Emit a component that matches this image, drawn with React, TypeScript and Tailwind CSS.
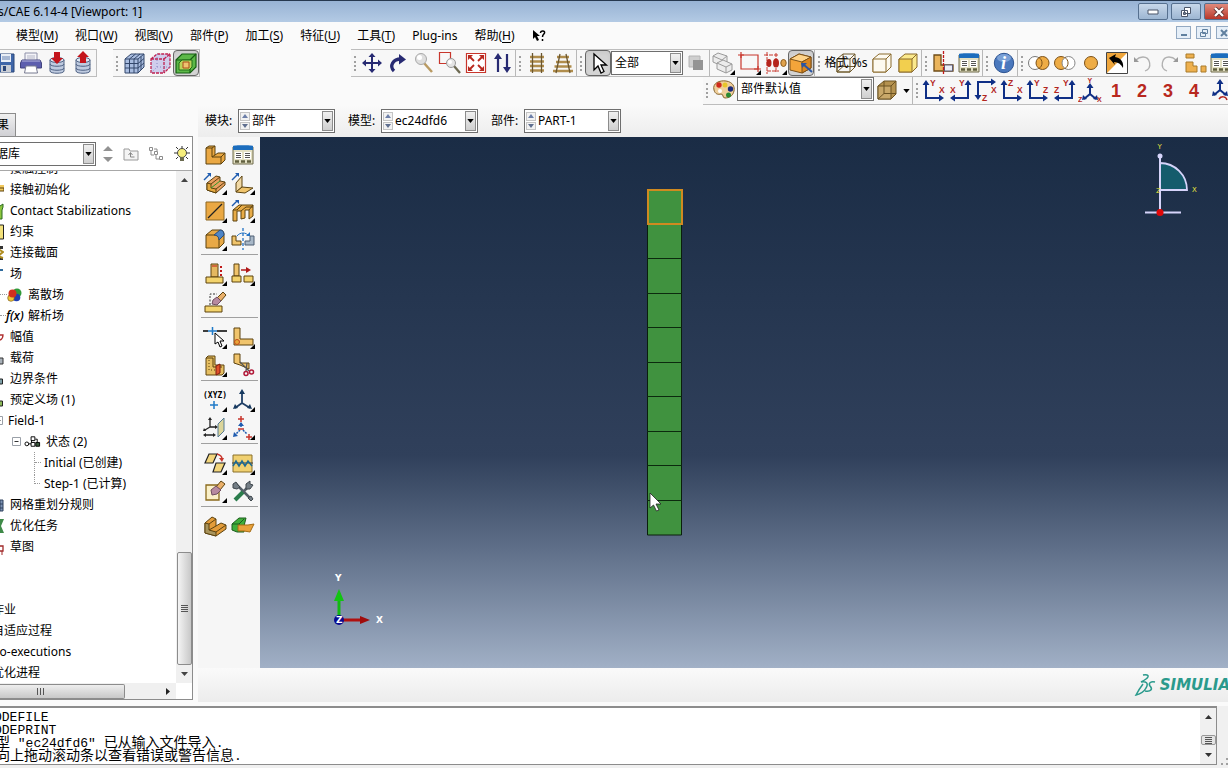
import React from "react";
import type { ReactNode } from "react";

/* ---------- small helpers ---------- */

const cx = (...c: (string | false | undefined)[]) => c.filter(Boolean).join(" ");

function Svg({ children, className = "size-6" }: { children: ReactNode; className?: string }) {
  return (
    <svg viewBox="0 0 24 24" className={cx("block shrink-0", className)} fill="none" aria-hidden="true">
      {children}
    </svg>
  );
}

const Corner = () => <path d="M24 19v5h-5z" fill="#000" />;

function ToolButton({ label, active, children }: { label: string; active?: boolean; children: ReactNode }) {
  return (
    <button
      type="button"
      aria-label={label}
      className={cx(
        "flex h-[26px] w-[26px] shrink-0 items-center justify-center",
        active && "rounded border border-[#666] bg-[#d4d4d4] shadow-inner",
      )}
    >
      {children}
    </button>
  );
}

const Grip = () => (
  <span className="flex w-2 shrink-0 items-center justify-center">
    <span className="h-[15px] border-l-2 border-dotted border-[#a0a0a0]" />
  </span>
);

const Sep = () => <span className="w-px shrink-0 bg-[#b8b8b8]" />;

const DownArrow = ({ className = "" }: { className?: string }) => (
  <svg viewBox="0 0 8 5" className={cx("h-1 w-[7px]", className)} aria-hidden="true">
    <path d="M0 0h8L4 5z" fill="#000" />
  </svg>
);

const UpDown = () => (
  <span className="flex h-full w-[10px] shrink-0 flex-col gap-px py-px">
    <span className="flex flex-1 items-center justify-center border border-[#c4c4c4] bg-[#f2f2f2]">
      <svg viewBox="0 0 6 4" className="h-1 w-1.5"><path d="M0 4h6L3 0z" fill="#6d7fa8" /></svg>
    </span>
    <span className="flex flex-1 items-center justify-center border border-[#c4c4c4] bg-[#f2f2f2]">
      <svg viewBox="0 0 6 4" className="h-1 w-1.5"><path d="M0 0h6L3 4z" fill="#5f6f8f" /></svg>
    </span>
  </span>
);

function Combo({ label, value, className, spin }: { label: string; value: string; className: string; spin?: boolean }) {
  return (
    <span className={cx("flex h-6 shrink-0 items-stretch overflow-hidden border border-[#6e6e6e] bg-white p-px", className)}>
      {spin && <UpDown />}
      <select
        aria-label={label}
        className="min-w-0 flex-1 appearance-none bg-transparent pl-0.5 text-xs text-black outline-none"
        defaultValue={value}
      >
        <option>{value}</option>
      </select>
      <span className="pointer-events-none flex w-[11px] shrink-0 items-center justify-center border border-[#8c8c8c] bg-linear-to-b from-[#f0f0f0] to-[#cfcfcf]">
        <DownArrow />
      </span>
    </span>
  );
}

/* ---------- toolbar icons ---------- */

const SaveIcon = () => (
  <Svg>
    <path d="M4 3h17v18H6l-2-2z" fill="#3f66a8" stroke="#2b4678" />
    <path d="M8 3h10v8H8z" fill="#e9eef6" />
    <path d="M9 6h8M9 8h8" stroke="#6580b0" />
    <path d="M8 14h10v7H8z" fill="#c9cdd4" />
    <path d="M10 15h3v5h-3z" fill="#2b4678" />
  </Svg>
);

const PrintIcon = () => (
  <Svg>
    <path d="M6 2h12v8H6z" fill="#f4f4f8" stroke="#8d90a8" />
    <path d="M8 5h8M8 7h8" stroke="#b3b5c6" />
    <path d="M3 9h18l1.500 3v5h-21v-5z" fill="#5d5fae" stroke="#43447f" />
    <path d="M3 10h18" stroke="#b9bae0" />
    <path d="M7 15h10l1.500 7h-13z" fill="#fff" stroke="#777a90" />
  </Svg>
);

const DbIcon = ({ up }: { up?: boolean }) => (
  <Svg>
    <path d="M5 9v11c0 3 14 3 14 0V9z" fill="#bfcbe0" stroke="#4f6284" />
    <ellipse cx="12" cy="9" rx="7" ry="2.500" fill="#dfe6f2" stroke="#4f6284" />
    <path d="M5 13c0 3 14 3 14 0M5 17c0 3 14 3 14 0" stroke="#4f6284" />
    {up ? <path d="M12 0l6 6h-3v6H9V6H6z" fill="#c4151c" /> : <path d="M9 1h6v6h3l-6 6-6-6h3z" fill="#c4151c" />}
  </Svg>
);

const WireCube = () => (
  <Svg>
    <path d="M3 8l6-5h13v13l-6 6H3z" fill="#a9bde0" stroke="#33476b" />
    <path d="M3 8h13v14M16 8l6-5M3 12.500h13l6-5M3 17h13l6-5M7.500 22V8l6-5M12 22V8l6-5M19 5.500V19" stroke="#33476b" />
  </Svg>
);

const HiddenCube = () => (
  <Svg>
    <path d="M3 8l6-5h13v13l-6 6H3z" fill="#cfcdec" />
    <path d="M3 8h13v14H3zM16 8l6-5v13l-6 6M3 8l6-5h13" stroke="#c02050" strokeWidth="1.300" strokeDasharray="3 1" />
    <path d="M9 3v13l-6 6M9 16h13" stroke="#8d8ac4" strokeDasharray="1 2" />
  </Svg>
);

const ShadedCube = () => (
  <Svg>
    <path d="M2 9l6-6h14v13l-6 6H2z" fill="#5cb848" stroke="#155d12" strokeWidth="1.200" />
    <path d="M2 9h14v13M16 9l6-6" stroke="#155d12" strokeWidth="1.200" />
    <path d="M5 12l3-3h10v7l-3 3H5z" fill="#bcd35a" stroke="#207018" />
    <path d="M9 11h6v6H9z" fill="#efc36f" stroke="#b04a1c" />
  </Svg>
);

const MoveIcon = () => (
  <Svg>
    <path d="M12 4v16M4 12h16" stroke="#272a72" strokeWidth="2" />
    <path d="M12 2l3.500 4h-7zM12 22l3.500-4h-7zM2 12l4-3.500v7zM22 12l-4-3.500v7z" fill="#272a72" />
  </Svg>
);

const RotateIcon = () => (
  <Svg>
    <path d="M8 20C3 15 7 8 15 8" stroke="#272a72" strokeWidth="3.300" />
    <path d="M13 3l7 5.500-7 5z" fill="#272a72" />
  </Svg>
);

const ZoomIcon = () => (
  <Svg>
    <path d="M12 12l8 9" stroke="#b99a62" strokeWidth="2.500" />
    <circle cx="9" cy="8" r="5.500" fill="#dedede" stroke="#a9a9a9" />
    <circle cx="7.500" cy="6.500" r="2.500" fill="#fff" />
  </Svg>
);

const ZoomBoxIcon = () => (
  <Svg>
    <path d="M1.500 1.500h11v11h-11z" stroke="#c8362c" strokeWidth="1.200" />
    <path d="M16 15l6 7" stroke="#6d6a52" strokeWidth="2.300" />
    <circle cx="13" cy="12" r="4.500" fill="#e4e4e4" stroke="#9a9a9a" />
    <circle cx="12" cy="11" r="2" fill="#fff" />
  </Svg>
);

const FitIcon = () => (
  <Svg>
    <path d="M2.500 2.500h19v19h-19z" fill="#fff" stroke="#c8362c" strokeWidth="1.200" />
    <path d="M5 5l5 5M19 5l-5 5M5 19l5-5M19 19l-5-5" stroke="#b8281e" strokeWidth="1.800" />
    <path d="M4 4h5l-5 5zM20 4h-5l5 5zM4 20h5l-5-5zM20 20h-5l5-5z" fill="#b8281e" />
  </Svg>
);

const CycleIcon = () => (
  <Svg>
    <path d="M8 5v16M17 3v16" stroke="#272a72" strokeWidth="2.200" />
    <path d="M8 2l4 6H4zM17 22l4-6h-8z" fill="#272a72" />
  </Svg>
);

const LadderIcon = ({ perspective }: { perspective?: boolean }) => (
  <Svg>
    {perspective ? (
      <>
        <path d="M6 6h12M5 11h14M3.500 15.500h17M2 20h20" stroke="#b08d4c" strokeWidth="2.300" />
        <path d="M9 3L5 22M15 3l4 19" stroke="#6a562f" strokeWidth="1.300" />
      </>
    ) : (
      <>
        <path d="M5 6h14M5 10.500h14M5 15h14M5 19.500h14" stroke="#b08d4c" strokeWidth="2.300" />
        <path d="M7.500 2v20M16.500 2v20" stroke="#6a562f" strokeWidth="1.300" />
      </>
    )}
  </Svg>
);

const CursorIcon = () => (
  <Svg>
    <path d="M8 3v16l4-4 3 7 3-1.500-3-6.500h5.500z" fill="#fff" stroke="#000" strokeWidth="1.300" />
  </Svg>
);

const GraySquares = () => (
  <Svg>
    <path d="M5 5h11v11H5z" fill="#cfcfcf" stroke="#b4b4b4" />
    <path d="M9 9h10v10H9z" fill="#949494" />
  </Svg>
);

const GrayCubes = () => (
  <Svg>
    <path d="M2 5l5-3 9 3v7l-5 3-9-4zM2 5l9 4v6M11 9l5-4" fill="#ececec" stroke="#9a9a9a" />
    <path d="M6 12l6-3 9 4v6l-6 3-9-4zM6 12l9 4v6M15 16l6-3" fill="#ececec" stroke="#9a9a9a" />
    <Corner />
  </Svg>
);

const DragRect = () => (
  <Svg>
    <path d="M4 4h17v14H4z" stroke="#c8362c" strokeWidth="1.200" />
    <path d="M1 4h6M4 1v6M17 18h7M21 15v6" stroke="#c8362c" strokeWidth="1.200" />
    <Corner />
  </Svg>
);

const DotsIcon = () => (
  <Svg>
    <path d="M1 4h14M4 1v22M4 20h12M13 2v20" stroke="#c8362c" strokeDasharray="4 1" />
    <ellipse cx="6" cy="12" rx="2.500" ry="4" fill="#b5241c" />
    <ellipse cx="13" cy="12" rx="3" ry="4.500" fill="#b5241c" />
    <ellipse cx="20.500" cy="12" rx="2.700" ry="3.500" fill="#e0a24c" stroke="#8a5a1c" />
    <Corner />
  </Svg>
);

const SelectBoxIcon = () => (
  <Svg>
    <path d="M1 8l9-5 12 3v11l-9 5-12-3z" fill="#f3a53a" stroke="#7c5118" />
    <path d="M1 8l9-5 12 3-9 5z" fill="#ffd489" stroke="#7c5118" />
    <path d="M13 11v11l9-5V6z" fill="#d98621" stroke="#7c5118" />
    <path d="M14 13l9 8" stroke="#2a55a4" strokeWidth="2" />
    <path d="M12 12h6l-5 5z" fill="#2a55a4" />
  </Svg>
);

const BoxIcon = ({ fill = "none", side = "none", stroke = "#8a6a2c", inner }: { fill?: string; side?: string; stroke?: string; inner?: boolean }) => (
  <Svg>
    <path d="M3 8l6-5h12v13l-5 5H3z" fill={side} stroke={stroke} />
    <path d="M3 8h13v13H3z" fill={fill} stroke={stroke} />
    <path d="M16 8l5-5" stroke={stroke} />
    {inner && <path d="M9 3v12.500L3 21M9 15.500h12" stroke={stroke} />}
  </Svg>
);

const SectionIcon = () => (
  <Svg>
    <path d="M3 4h7v10h12v6H3z" fill="#eab45c" stroke="#6f4c17" strokeWidth="1.300" />
    <path d="M13.500 14h8v6h-8z" fill="#eceef6" stroke="#5c5c78" />
    <path d="M12.500 0v24" stroke="#c01818" strokeWidth="1.300" strokeDasharray="3 1" />
  </Svg>
);

const ManagerIcon = () => (
  <Svg>
    <path d="M2 4h20v17H2z" fill="#e3e0c4" stroke="#6e6a4a" />
    <path d="M2 3c0-1 20-1 20 0v4H2z" fill="#1c6dbd" />
    <path d="M4 9h7v7H4zM13 9h7v7h-7z" fill="#fff" />
    <path d="M5 10.500h5M5 12.500h5M5 14.500h5M14 10.500h5M14 12.500h5M14 14.500h5" stroke="#555" />
    <path d="M4 18.500h4M10 18.500h4M16 18.500h4" stroke="#62603f" strokeWidth="2.500" />
  </Svg>
);

const InfoIcon = () => (
  <Svg>
    <circle cx="12" cy="12" r="9.700" fill="#4a78bd" stroke="#2d5391" />
    <ellipse cx="12" cy="7" rx="7" ry="4" fill="#7aa0d6" />
    <text x="9" y="18" fill="#fff" fontFamily="Liberation Serif, serif" fontSize="18" fontWeight="bold" fontStyle="italic">i</text>
  </Svg>
);

const Circles = ({ mode }: { mode: "right" | "left" | "one" }) => (
  <Svg>
    {mode === "right" && (
      <>
        <circle cx="8" cy="12" r="6.500" fill="#fff" stroke="#777" />
        <circle cx="15.500" cy="12" r="6.500" fill="#eeac45" stroke="#7c5118" />
        <path d="M12 6.500a6.500 6.500 0 0 1 0 11" stroke="#7c5118" />
      </>
    )}
    {mode === "left" && (
      <>
        <circle cx="8" cy="12" r="6.500" fill="#eeac45" stroke="#7c5118" />
        <circle cx="15.500" cy="12" r="6.500" fill="#fff" stroke="#888" />
        <path d="M12 6.500a6.500 6.500 0 0 1 0 11" stroke="#7c5118" />
      </>
    )}
    {mode === "one" && <circle cx="12" cy="12" r="6.500" fill="#eeac45" stroke="#7c5118" />}
  </Svg>
);

const SwapIcon = () => (
  <Svg>
    <path d="M1.500 1.500h21v21h-21z" fill="#fff" stroke="#444" />
    <path d="M2 2h20L2 22z" fill="#efa63c" />
    <path d="M4 7l7-4-1 3c6 1 9 5 8 11-2-4-5-6-9-6l1 3z" fill="#000" />
  </Svg>
);

const UndoIcon = ({ redo }: { redo?: boolean }) => (
  <Svg>
    {redo ? (
      <>
        <path d="M10 20C2 17 5 6 12 6c3 0 5 1 7 3" stroke="#b0b0b0" strokeWidth="1.300" />
        <path d="M21 6v5h-5z" fill="#999" />
      </>
    ) : (
      <>
        <path d="M14 20c8-3 5-14-2-14-3 0-5 1-7 3" stroke="#b0b0b0" strokeWidth="1.300" />
        <path d="M3 6v5h5z" fill="#999" />
      </>
    )}
  </Svg>
);

const BlocksIcon = () => (
  <Svg>
    <path d="M3 3h8v4H3zM3 11h7v4h4v6H3zM18 15h5v6h-5z" fill="#eeb04e" stroke="#a87a2a" />
  </Svg>
);

const PaletteIcon = () => (
  <Svg>
    <path d="M2 12C0 5 8 2 14 3c7 1 9 6 8 10-1 5-5 7-9 7-3 0-1-4-4-4-3 1-6 0-7-4z" fill="#efcf9b" stroke="#86642e" />
    <circle cx="7" cy="7" r="2.700" fill="#cf2a1c" />
    <circle cx="13" cy="7" r="2.500" fill="#e8c52a" />
    <circle cx="18.500" cy="11" r="2.700" fill="#1c2a7a" />
    <circle cx="16.500" cy="17" r="2.500" fill="#2a8a32" />
    <circle cx="8" cy="13" r="2" fill="#fff" />
  </Svg>
);

type AxisKind = "YXr" | "YXl" | "ZXd" | "ZXr" | "YZr" | "ZYl";

const AxisLetter = ({ x, y, c }: { x: number; y: number; c: string }) => (
  <text x={x} y={y} fill="#b3261e" fontFamily="Liberation Sans, sans-serif" fontSize="8.500" fontWeight="bold">{c}</text>
);

const AxisIcon = ({ kind }: { kind: AxisKind }) => {
  const left = kind === "YXl" || kind === "ZYl";
  const down = kind === "ZXd";
  return (
    <Svg>
      {down ? (
        <>
          <path d="M4 20V4h16" stroke="#0f2f86" strokeWidth="2" />
          <path d="M4 22l3.500-5h-7zM22 4l-5-3.500v7z" fill="#0f2f86" />
        </>
      ) : left ? (
        <>
          <path d="M20 4v16H4" stroke="#0f2f86" strokeWidth="2" />
          <path d="M20 2l3.500 5h-7zM2 20l5-3.500v7z" fill="#0f2f86" />
        </>
      ) : (
        <>
          <path d="M4 4v16h16" stroke="#0f2f86" strokeWidth="2" />
          <path d="M4 2l3.500 5h-7zM22 20l-5-3.500v7z" fill="#0f2f86" />
        </>
      )}
      {kind === "YXr" && <><AxisLetter x={8} y={8} c="Y" /><AxisLetter x={17} y={15} c="X" /></>}
      {kind === "YXl" && <><AxisLetter x={11} y={8} c="Y" /><AxisLetter x={2} y={15} c="X" /></>}
      {kind === "ZXd" && <><AxisLetter x={17} y={15} c="X" /><AxisLetter x={8} y={23} c="Z" /></>}
      {kind === "ZXr" && <><AxisLetter x={8} y={8} c="Z" /><AxisLetter x={17} y={15} c="X" /></>}
      {kind === "YZr" && <><AxisLetter x={8} y={8} c="Y" /><AxisLetter x={17} y={15} c="Z" /></>}
      {kind === "ZYl" && <><AxisLetter x={11} y={8} c="Y" /><AxisLetter x={2} y={15} c="Z" /></>}
    </Svg>
  );
};

const IsoIcon = ({ letters = true }: { letters?: boolean }) => (
  <Svg>
    <g transform={letters ? undefined : "translate(0 -4)"}>
      <path d="M12 9v7l-6 5M12 16l6 5" stroke="#0f2f86" strokeWidth="2" />
      <path d="M12 5l3.500 5h-7zM4 22l1-5 4 4zM20 22l-1-5-4 4z" fill="#0f2f86" />
    </g>
    {letters ? (
      <g fill="#b3261e" fontFamily="Liberation Sans, sans-serif" fontSize="7" fontWeight="bold">
        <text x="9.500" y="5">Y</text><text x="0" y="24">Z</text><text x="19" y="24">X</text>
      </g>
    ) : (
      <path d="M11 21c2-3 7-3 8 1" stroke="#b3261e" strokeWidth="1.500" />
    )}
  </Svg>
);

/* ---------- toolbox icons ---------- */

const Y = "#f0c46c";
const O = "#5c430f";

const PartIcon = () => (
  <Svg>
    <path d="M3 5l3-2h6v9l3-2h7v7l-4 4H3z" fill="#eaa843" stroke={O} />
    <path d="M3 5h6v9h9v7M9 5l3-2M9 14l3-2M18 14l4-4" stroke={O} />
  </Svg>
);
const ExtrudeIcon = () => (
  <Svg>
    <path d="M4 12l9-7 4 1v4l5 1v3l-9 8-9-3z" fill="#e8a060" stroke={O} />
    <path d="M4 12l4 1v4l5 1v4l-9-3z" fill="#e4a83f" stroke={O} />
    <path d="M8 13l9-7M13 18l9-7" stroke={O} />
    <path d="M8 17l9-7" stroke="#2f9a2a" />
    <path d="M1 9l6-6" stroke="#1f5cb0" strokeWidth="1.500" /><path d="M8 2v4L4 2z" fill="#1f5cb0" />
    <Corner />
  </Svg>
);
const ShellIcon = () => (
  <Svg>
    <path d="M5 12l6-7v11l-6 5z" fill="#f1d9a6" stroke={O} /><path d="M5 21l6-5 11 1-8 5z" fill={Y} stroke={O} />
    <path d="M1 9l6-6" stroke="#1f5cb0" strokeWidth="1.500" /><path d="M8 2v4L4 2z" fill="#1f5cb0" />
    <Corner />
  </Svg>
);
const WireIcon = () => (
  <Svg><path d="M3 3h18v18H3z" fill="#eaa843" stroke="#8b6622" /><path d="M5 19L19 5" stroke="#222" strokeWidth="1.300" /><Corner /></Svg>
);
const CutIcon = () => (
  <Svg>
    <path d="M2 11l6-5h14v11l-4 3v-9h-4v8l-4 1v-8H6v10H2z" fill="#e8ac48" stroke={O} />
    <path d="M2 11h4l5-5M10 12l5-4h7M18 11l4-5" stroke={O} />
    <path d="M1 7l5-5" stroke="#1f5cb0" strokeWidth="1.500" /><path d="M8 1v4L4 1z" fill="#1f5cb0" /><Corner />
  </Svg>
);
const RoundIcon = () => (
  <Svg>
    <path d="M3 8l6-5h8c3 0 4 2 4 5v8l-5 5H3z" fill="#e8a946" stroke={O} />
    <path d="M3 8h8c4 0 5 2 5 5v8" stroke={O} /><path d="M11 8l6-5c3 0 4 2 4 5l-5 5c0-3-2-5-5-5z" fill="#4f86c6" stroke="#2a4d7c" /><Corner />
  </Svg>
);
const MirrorIcon = () => (
  <Svg>
    <path d="M1 9h4v5h5v4H1z" fill={Y} stroke={O} /><path d="M23 9h-4v5h-5v4h9z" fill="#a8b8c8" stroke="#4f5f73" />
    <path d="M12 1v22" stroke="#2272c4" strokeWidth="1.300" strokeDasharray="3 2" /><path d="M6 9c3-4 9-4 12 0" stroke="#2272c4" /><path d="M15 9h4V5z" fill="#2272c4" />
  </Svg>
);
const EditFeature = () => (
  <Svg><path d="M8 2h7v13H8z" fill="#e4b860" stroke={O} /><path d="M3 15h17v6H3z" fill="#f3d36c" stroke={O} /><path d="M18 4v10" stroke="#c01818" strokeWidth="2" strokeDasharray="2 2" /><path d="M9 4h5" stroke="#c01818" /><Corner /></Svg>
);
const MoveFeature = () => (
  <Svg><path d="M3 2h5v12H3z" fill={Y} stroke={O} /><path d="M1 14h9v6H1zM13 14h9v6h-9z" fill="#f3d36c" stroke={O} /><path d="M10 8h6" stroke="#b01818" strokeWidth="1.500" /><path d="M20 8l-5-3v6z" fill="#b01818" /><Corner /></Svg>
);
const DeleteFeature = () => (
  <Svg><path d="M2 16h17v6H2z" fill="#f3d36c" stroke={O} /><path d="M7 15V4h7" stroke="#333" strokeDasharray="2 1.500" /><path d="M14 8l6-6 3 3-6 7z" fill="#eab06a" stroke={O} /><path d="M10 10l4-3 4 4-4 4-5-1z" fill="#b78aa0" stroke="#704f60" /></Svg>
);
const DatumCursor = () => (
  <Svg><path d="M0 6h5M14 6h10" stroke="#000" strokeWidth="1.300" /><path d="M5 6h9M9.500 2v8" stroke="#1f7ac8" strokeWidth="1.500" /><path d="M12 8v11l3-2 2 5 2-1-2-5h4z" fill="#fff" stroke="#000" /><Corner /></Svg>
);
const LPoint = () => (
  <Svg><path d="M3 3h6v11h13v6H3z" fill={Y} stroke={O} /><circle cx="6" cy="17" r="2.500" fill="#e8a63a" stroke="#c04818" /><Corner /></Svg>
);
const RegionIcon = () => (
  <Svg><path d="M3 5l2-2h7v9h9v8l-2 2H3z" fill="#e6bf62" stroke={O} /><path d="M3 5h7v9h9" stroke={O} /><path d="M6 7v12M8 17h9" stroke={O} strokeDasharray="1 2" /><path d="M13 13l4-2v9l-4 2z" fill="#e0512a" stroke="#7c1c10" /><Corner /></Svg>
);
const ScissorIcon = () => (
  <Svg><path d="M3 1h6v9h9v6L9 12l-6-2z" fill={Y} stroke={O} /><path d="M9 9l9 9M16 10l-1 8" stroke="#555" strokeWidth="1.300" /><circle cx="15" cy="20.500" r="2" stroke="#b01838" strokeWidth="1.500" /><circle cx="20.500" cy="19" r="2" stroke="#b01838" strokeWidth="1.500" /></Svg>
);
const XyzIcon = () => (
  <Svg><text x="0" y="10" fontFamily="DejaVu Sans Mono, monospace" fontWeight="bold" fontSize="8" fill="#000">(XYZ)</text><path d="M7 17h8M11 13v8" stroke="#1f7ac8" strokeWidth="1.500" /><Corner /></Svg>
);
const TriAxis = () => (
  <Svg><path d="M11 4v12M11 15l-7 5M11 15l8 5" stroke="#1f3f66" strokeWidth="1.800" /><path d="M11 1l3 5H8zM2 21l2-5 3 4zM21 21l-5-1 3-4z" fill="#173a60" /><Corner /></Svg>
);
const PlaneIcon = () => (
  <Svg><path d="M7 3v8l-5 3M7 11h6M2 19h9" stroke="#222" strokeWidth="1.300" /><path d="M7 1l2 3H5zM15 11l-3 2V9zM0 15l1-3 2 3zM0 19l3-2v4zM13 19l-3-2v4z" fill="#222" /><path d="M15 8l6-6v13l-6 6z" fill="#dcd59a" stroke="#557a94" /><Corner /></Svg>
);
const DatumPoints = () => (
  <Svg><path d="M7 3h6M10 0v6M7 13h6M15 21h6M18 18v6" stroke="#c8362c" strokeWidth="1.500" /><path d="M10 7v4M9 14l-5 5M12 14l4 4" stroke="#1f5cb0" strokeWidth="1.500" strokeDasharray="2 1" /><path d="M10 6l3 4H7zM2 21l1-5 4 4z" fill="#1f5cb0" /><Corner /></Svg>
);
const PlaneMove = () => (
  <Svg><path d="M2 12l4-9h8l-4 9zM10 21l3-9h9l-4 9z" fill="#f3d67c" stroke="#222" strokeWidth="1.200" /><path d="M14 3c4 1 5 3 5 5" stroke="#c8362c" strokeWidth="1.500" /><path d="M19 11l-3-4h5z" fill="#c8362c" /><Corner /></Svg>
);
const WaveIcon = () => (
  <Svg><path d="M2 4h19v17H2z" fill="#f0d070" stroke="#8a702a" /><path d="M1 12h21" stroke="#3a3a3a" /><path d="M2 15l3-5 3 5 3-5 3 5 3-5 4 5" stroke="#1e6a92" strokeWidth="1.500" /><Corner /></Svg>
);
const ErasePage = () => (
  <Svg><path d="M3 6h13v15H3z" fill="#faf0c8" stroke="#8a6a1c" strokeWidth="1.300" /><path d="M13 8l5-6 4 3-5 6z" fill="#eab06a" stroke={O} /><path d="M8 11l5-4 5 4-4 4-5 1z" fill="#b78aa0" stroke="#704f60" /><Corner /></Svg>
);
const ToolsIcon = () => (
  <Svg><path d="M5 5l15 15" stroke="#566069" strokeWidth="2.500" /><path d="M4 21l8-8" stroke="#2b7d4c" strokeWidth="4" /><path d="M12 13l7-7" stroke="#566069" strokeWidth="2.500" /><path d="M2 5l3-2 2 3 2 2-3 2-4-1zM15 5l4-3v3l3 1-3 4h-4zM17 19l3-2 2 3-2 2z" fill="#747e86" stroke="#3e464c" /></Svg>
);
const CombineIcon = () => (
  <Svg><path d="M2 9l7-6 4 2v7l5-3 5 2v4l-10 7-11-3z" fill="#e39c3a" stroke={O} /><path d="M6 10l7-5M6 16l7-4M13 18l10-7" stroke={O} /><path d="M2 9l4 1v6l7 2v4l-11-3z" fill="#a8945c" stroke={O} /></Svg>
);
const RepairIcon = () => (
  <Svg><path d="M1 10l7-6h7l-2 8v6H6l-5-2z" fill="#3fae3b" stroke="#1c5c1c" /><path d="M1 10h7l5-5M8 10v7" stroke="#1c5c1c" /><path d="M7 11h10l6-1-4 8-6-1H7z" fill="#e9a13a" stroke="#a56c14" /></Svg>
);

/* ---------- chrome ---------- */

const WindowButton = ({ label, close, children }: { label: string; close?: boolean; children: ReactNode }) => (
  <button
    type="button"
    aria-label={label}
    className={cx(
      "flex h-[17px] w-[30px] items-center justify-center rounded-xs border border-[#56708f]",
      close ? "bg-linear-to-b from-[#e0897c] to-[#b8362a]" : "bg-linear-to-b from-[#c8d8ea] to-[#9db6d2]",
    )}
  >
    {children}
  </button>
);

const SmallButton = ({ label, children }: { label: string; children: ReactNode }) => (
  <button type="button" aria-label={label} className="flex h-[13px] w-[15px] items-center justify-center border border-[#93a9c2] bg-[#e6eff8]">
    {children}
  </button>
);

function TitleBar() {
  return (
    <header className="flex h-[22px] shrink-0 items-center border-t border-[#26384f] bg-linear-to-b from-[#98b3d4] to-[#b3cae4]">
      <h1 className="-ml-0.5 flex-1 text-xs text-black">s/CAE 6.14-4 [Viewport: 1]</h1>
      <div className="-mr-1.5 flex shrink-0 gap-[3px]">
        <WindowButton label="最小化">
          <svg viewBox="0 0 12 6" className="h-1.5 w-3"><path d="M1 1h10v4H1z" fill="#fff" stroke="#4a5568" /></svg>
        </WindowButton>
        <WindowButton label="还原">
          <svg viewBox="0 0 12 12" className="size-3"><path d="M4.500 1.500h6v6h-6z M1.500 4.500h6v6h-6z M3.500 6.500h2v2h-2z" fill="#fff" stroke="#4a5568" /></svg>
        </WindowButton>
        <WindowButton label="关闭" close>
          <svg viewBox="0 0 12 10" className="h-2.5 w-3"><path d="M2 1l8 8M10 1L2 9" stroke="#5b3030" strokeWidth="4" /><path d="M2 1l8 8M10 1L2 9" stroke="#fff" strokeWidth="2.400" /></svg>
        </WindowButton>
      </div>
    </header>
  );
}

const MENUS: [string, string, string][] = [
  ["模型(", "M", ")"], ["视口(", "W", ")"], ["视图(", "V", ")"], ["部件(", "P", ")"], ["加工(", "S", ")"],
  ["特征(", "U", ")"], ["工具(", "T", ")"], ["Plug-ins", "", ""], ["帮助(", "H", ")"],
];

function MenuBar() {
  return (
    <nav className="flex h-[27px] shrink-0 items-center justify-between bg-[#fafafa]">
      <div className="flex shrink-0 items-center gap-[17px] pl-4 text-xs text-black">
        {MENUS.map(([a, k, b]) => (
          <button key={a} type="button" className="whitespace-nowrap">
            {a}<u className="underline-offset-2">{k}</u>{b}
          </button>
        ))}
        <button type="button" aria-label="上下文帮助">
          <svg viewBox="0 0 14 12" className="h-3 w-3.5">
            <path d="M1 0v9l2-2 2 4 2-1-2-4h3z" fill="#000" />
            <path d="M8.500 3c0-3 5-2.500 4 0-.5 1.500-2 1.500-2 4M10.500 9v2" stroke="#000" strokeWidth="1.500" fill="none" />
          </svg>
        </button>
      </div>
      <div className="-mr-[3px] flex shrink-0 gap-[5px] pb-1.5">
        <SmallButton label="最小化视口"><span className="mt-1 h-0.5 w-1.5 bg-[#60809f]" /></SmallButton>
        <SmallButton label="还原视口">
          <svg viewBox="0 0 10 10" className="size-2.5"><path d="M3.500 1.500h5v4h-5zM1.500 4.500h5v4h-5z" fill="#e6eff8" stroke="#60809f" /></svg>
        </SmallButton>
        <SmallButton label="关闭视口">
          <svg viewBox="0 0 10 10" className="size-2.5"><path d="M2 2l6 6M8 2L2 8" stroke="#60809f" strokeWidth="2" /></svg>
        </SmallButton>
      </div>
    </nav>
  );
}

const AXES: AxisKind[] = ["YXr", "YXl", "ZXd", "ZXr", "YZr", "ZYl"];
const BAR = "flex shrink-0 items-stretch border-y border-r border-[#bdbdbd] bg-[#f7f7f7]";

function Toolbars() {
  return (
    <div className="flex shrink-0 flex-col overflow-hidden bg-[#fafafa]">
      <div className="flex h-7 shrink-0">
        <div className={cx(BAR, "-ml-2 w-[105px]")}>
          <ToolButton label="保存"><SaveIcon /></ToolButton>
          <ToolButton label="打印"><PrintIcon /></ToolButton>
          <ToolButton label="导入数据库"><DbIcon /></ToolButton>
          <ToolButton label="导出数据库"><DbIcon up /></ToolButton>
        </div>
        <div className={cx(BAR, "ml-4")}>
          <Grip />
          <ToolButton label="线框显示"><WireCube /></ToolButton>
          <ToolButton label="隐藏线显示"><HiddenCube /></ToolButton>
          <ToolButton label="着色显示" active><ShadedCube /></ToolButton>
        </div>
        <div className={cx(BAR, "ml-[151px]")}>
          <Grip />
          <ToolButton label="平移"><MoveIcon /></ToolButton>
          <ToolButton label="旋转"><RotateIcon /></ToolButton>
          <ToolButton label="缩放"><ZoomIcon /></ToolButton>
          <ToolButton label="框选缩放"><ZoomBoxIcon /></ToolButton>
          <ToolButton label="适应窗口"><FitIcon /></ToolButton>
          <ToolButton label="切换视图"><CycleIcon /></ToolButton>
          <Sep />
          <Grip />
          <ToolButton label="关闭透视"><LadderIcon /></ToolButton>
          <ToolButton label="打开透视"><LadderIcon perspective /></ToolButton>
          <Sep />
          <Grip />
          <ToolButton label="选择" active><CursorIcon /></ToolButton>
          <Combo label="选择过滤" value="全部" className="w-[72px] self-center" />
          <ToolButton label="叠加"><GraySquares /></ToolButton>
          <Sep />
          <ToolButton label="实体选择"><GrayCubes /></ToolButton>
          <ToolButton label="拖动形状"><DragRect /></ToolButton>
          <ToolButton label="选择范围"><DotsIcon /></ToolButton>
          <ToolButton label="选择最近" active><SelectBoxIcon /></ToolButton>
          <Sep />
          <Grip />
          <div className="grid w-[46px] shrink-0 items-center justify-items-center">
            <span className="col-start-1 row-start-1"><BoxIcon inner stroke="#6f5a2c" /></span>
            <span className="col-start-1 row-start-1 text-xs whitespace-nowrap text-black">格式 %s</span>
          </div>
          <ToolButton label="消隐盒"><BoxIcon fill="#fdfaf0" side="#fdfaf0" /></ToolButton>
          <ToolButton label="着色盒"><BoxIcon fill="#f2cf4e" side="#fbe98c" /></ToolButton>
          <Sep />
          <Grip />
          <ToolButton label="截面"><SectionIcon /></ToolButton>
          <ToolButton label="截面管理器"><ManagerIcon /></ToolButton>
          <Sep />
          <Grip />
          <ToolButton label="查询信息"><InfoIcon /></ToolButton>
          <Sep />
          <Grip />
          <ToolButton label="替换所选"><Circles mode="right" /></ToolButton>
          <ToolButton label="删除所选"><Circles mode="left" /></ToolButton>
          <ToolButton label="全部替换"><Circles mode="one" /></ToolButton>
          <ToolButton label="反转"><SwapIcon /></ToolButton>
          <ToolButton label="撤销"><UndoIcon /></ToolButton>
          <ToolButton label="重做"><UndoIcon redo /></ToolButton>
          <ToolButton label="显示组"><BlocksIcon /></ToolButton>
          <ToolButton label="显示组管理器"><ManagerIcon /></ToolButton>
        </div>
      </div>
      <div className="flex h-7 shrink-0 justify-start">
        <div className={cx(BAR, "ml-[703px] items-center border-t-0")}>
          <Grip />
          <ToolButton label="颜色"><PaletteIcon /></ToolButton>
          <Combo label="颜色映射" value="部件默认值" className="w-[137px]" />
          <ToolButton label="半透明"><BoxIcon inner fill="#c9a869" side="#b5924f" stroke="#6b5222" /></ToolButton>
          <button type="button" aria-label="半透明选项" className="flex w-3 shrink-0 items-center justify-center"><DownArrow /></button>
          <span className="w-px shrink-0 self-stretch bg-[#b8b8b8]" />
          <Grip />
          {AXES.map((k) => (
            <ToolButton key={k} label={"视图 " + k}><AxisIcon kind={k} /></ToolButton>
          ))}
          <ToolButton label="等轴测"><IsoIcon /></ToolButton>
          {["1", "2", "3", "4"].map((n) => (
            <button key={n} type="button" className="flex w-[26px] shrink-0 items-center justify-center font-['Liberation_Sans',sans-serif] text-lg font-bold text-[#b8281e]">{n}</button>
          ))}
          <ToolButton label="自定义视图"><IsoIcon letters={false} /></ToolButton>
        </div>
      </div>
    </div>
  );
}

/* ---------- model tree ---------- */

const TI = "block h-[18px] w-[14px] shrink-0";
const treeIcon: Record<string, ReactNode> = {
  yellow: <svg className={TI} viewBox="0 0 14 18"><path d="M0 4h14v3H7v9H0z" fill="#f0c75c" /><path d="M0 7h14v3H7" stroke="#5c430f" fill="#f0c75c" /></svg>,
  green: <svg className={TI} viewBox="0 0 14 18"><path d="M2 4h8l3-2v3l-1 3v9H7V8H2z" fill="#8cc63e" stroke="#2a6a20" /></svg>,
  page: <svg className={TI} viewBox="0 0 14 18"><path d="M2 2h11.500v14H2z" fill="#f3e17a" stroke="#222" /></svg>,
  conn: <svg className={TI} viewBox="0 0 14 18"><path d="M4 2h9v3H4zM4 13h9v3H4z" fill="#333" /><path d="M8 5l5 3-5 4 5 2" stroke="#b08d20" strokeWidth="2" fill="none" /></svg>,
  field: <svg className={TI} viewBox="0 0 14 18"><path d="M6 14V5h7" stroke="#2f6a9c" strokeWidth="2" fill="none" /></svg>,
  amp: <svg className={TI} viewBox="0 0 14 18"><path d="M2 7h11c0 4-2 6-8 6" stroke="#b03030" strokeWidth="1.300" fill="none" /></svg>,
  load: <svg className={TI} viewBox="0 0 14 18"><path d="M3 6h6v3h4v6H3z" fill="#a8b0b8" stroke="#333" /></svg>,
  bc: <svg className={TI} viewBox="0 0 14 18"><path d="M3 9h9.500v5H3z" fill="#7ea0a8" stroke="#222" /></svg>,
  pre: <svg className={TI} viewBox="0 0 14 18"><path d="M3 10h9.500v5H3z" fill="#8cba5a" stroke="#222" /></svg>,
  mesh: <svg className={TI} viewBox="0 0 14 18"><path d="M2 4h11v11H2z" fill="#7c92b4" stroke="#2f405c" /><path d="M2 8h11M2 12h11M6 4v11M10 4v11" stroke="#2f405c" /></svg>,
  opt: <svg className={TI} viewBox="0 0 14 18"><path d="M2 2h12l-3 7 3 7H2z" fill="#3f8a48" /></svg>,
  sketch: <svg className={TI} viewBox="0 0 14 18"><path d="M4 8h9v5H4z" fill="#fff" stroke="#a02828" strokeWidth="1.300" /><path d="M12 13v4" stroke="#a02828" /></svg>,
};

const MinusBox = ({ className = "" }: { className?: string }) => (
  <svg viewBox="0 0 9 9" className={cx("size-[9px] shrink-0", className)}><path d="M.5.5h8v8h-8z" fill="#fff" stroke="#9aa0a8" /><path d="M2.500 4.500h4" stroke="#333" /></svg>
);

const Row = ({ children, className = "" }: { children?: ReactNode; className?: string }) => (
  <li className={cx("flex h-[21px] shrink-0 items-center whitespace-nowrap", className)}>{children}</li>
);

const IconRow = ({ icon, children }: { icon: string; children: ReactNode }) => (
  <Row className="-ml-[10px] gap-1.5">{treeIcon[icon]}<span>{children}</span></Row>
);

const VThumbLines = () => (
  <span className="flex h-[7px] w-[7px] flex-col justify-between">
    <i className="h-px bg-[#555]" /><i className="h-px bg-[#555]" /><i className="h-px bg-[#555]" /><i className="h-px bg-[#555]" />
  </span>
);

function ModelTree() {
  return (
    <aside className="flex w-[193px] shrink-0 flex-col overflow-hidden pt-2">
      <div className="flex h-[23px] shrink-0">
        <button type="button" className="-ml-5 w-9 border border-b-0 border-[#8c8c8c] bg-linear-to-b from-[#f0f0f0] to-[#d0d0d4] text-right text-xs">
          <span className="mr-1.5">结果</span>
        </button>
      </div>
      <div className="flex min-h-0 flex-1 flex-col border-t border-r border-b border-[#8c8c8c] bg-white">
        <div className="flex h-[34px] shrink-0 items-center justify-between border-b border-[#a8a8a8]">
          <Combo label="模型数据库" value="模型数据库" className="-ml-11 w-[140px]" />
          <div className="flex flex-1 items-center justify-between pr-0.5 pl-[7px]">
            <svg viewBox="0 0 10 18" className="h-[18px] w-2.5"><path d="M0 6h10L5 1zM0 12h10l-5 5z" fill="#929292" /></svg>
            <button type="button" aria-label="上一级">
              <svg viewBox="0 0 16 14" className="h-3.5 w-4"><path d="M1 2h5l1 2h8v9H1z" fill="#f4f4f4" stroke="#9a9a9a" /><path d="M7.500 6v4h4M5.500 8l2-2.500 2 2.500" stroke="#888" fill="none" /></svg>
            </button>
            <button type="button" aria-label="展开树">
              <svg viewBox="0 0 16 16" className="size-4"><path d="M1.500 1.500h3v3h-3zM6.500 5.500h3v3h-3zM11.500 10.500h3v3h-3zM3 5v4h3M8 9v4h3M6 3h3v2" fill="none" stroke="#8c8c8c" /></svg>
            </button>
            <button type="button" aria-label="提示">
              <svg viewBox="0 0 16 16" className="size-4"><circle cx="8" cy="7" r="4.500" fill="#f6ee7c" stroke="#444" /><path d="M6 11h4v4H6z" fill="#6b6b50" /><path d="M8 0v2M0 7h3M13 7h3M2 1l2 2M14 1l-2 2M2 13l2-2M14 13l-2-2" stroke="#333" /></svg>
            </button>
          </div>
        </div>
        <div className="flex min-h-0 flex-1">
          <div className="flex min-w-0 flex-1 flex-col">
            <div className="min-h-0 flex-1 overflow-hidden">
              <ul className="-mt-[13px] flex flex-col text-xs text-black">
                <IconRow icon="yellow">接触控制</IconRow>
                <IconRow icon="yellow">接触初始化</IconRow>
                <IconRow icon="green">Contact Stabilizations</IconRow>
                <IconRow icon="page">约束</IconRow>
                <IconRow icon="conn">连接截面</IconRow>
                <IconRow icon="field">场</IconRow>
                <Row>
                  <span className="w-[7px] border-t border-dotted border-[#999]" />
                  <svg viewBox="0 0 15 14" className="h-3.5 w-[15px]">
                    <circle cx="10" cy="5" r="4.500" fill="#2f9a3a" /><circle cx="9.500" cy="9.500" r="3.800" fill="#1f3fb0" /><circle cx="4" cy="10" r="3.300" fill="#f0c83a" stroke="#6b4a10" strokeWidth=".6" /><circle cx="5.500" cy="5.500" r="4" fill="#d0301e" />
                  </svg>
                  <span className="pl-1.5">离散场</span>
                </Row>
                <Row>
                  <span className="w-1.5 border-t border-dotted border-[#999]" />
                  <i className="w-[22px] font-['Open_Sans'] font-semibold">f(x)</i>
                  <span>解析场</span>
                </Row>
                <IconRow icon="amp">幅值</IconRow>
                <IconRow icon="load">载荷</IconRow>
                <IconRow icon="bc">边界条件</IconRow>
                <IconRow icon="pre">预定义场 (1)</IconRow>
                <Row><MinusBox className="-ml-[6px]" /><span className="pl-[5px]">Field-1</span></Row>
                <Row className="pl-3">
                  <MinusBox />
                  <svg viewBox="0 0 18 14" className="ml-[3px] h-3.5 w-[17px]"><circle cx="3" cy="9" r="2" fill="#fff" stroke="#000" /><path d="M7.500 1.500h4v4h-4zM5 9h3M8 9V5M12 4h2v4" fill="none" stroke="#000" /><path d="M7.500 7.500h4v4h-4z" fill="#fff" stroke="#000" /><path d="M12.500 7.500h4v4h-4z" fill="#38583c" stroke="#000" /></svg>
                  <span className="pl-[5px]">状态 (2)</span>
                </Row>
                <Row className="pl-[34px]"><span className="flex h-full w-2.5 items-center border-l border-dotted border-[#999]"><i className="w-1.5 border-t border-dotted border-[#999]" /></span>Initial (已创建)</Row>
                <Row className="pl-[34px]"><span className="mb-2.5 h-2.5 w-1.5 border-b border-l border-dotted border-[#999]" /><span className="pl-1">Step-1 (已计算)</span></Row>
                <IconRow icon="mesh">网格重划分规则</IconRow>
                <IconRow icon="opt">优化任务</IconRow>
                <IconRow icon="sketch">草图</IconRow>
                <Row />
                <Row />
                <Row className="-ml-2">作业</Row>
                <Row className="-ml-2">自适应过程</Row>
                <Row className="-ml-2">Co-executions</Row>
                <Row className="-ml-2">优化进程</Row>
              </ul>
            </div>
            <div className="flex h-4 shrink-0 items-center bg-[#f0f0f0]">
              <div className="flex h-[15px] w-[125px] items-center justify-center rounded-r-xs border border-l-0 border-[#8c8c8c] bg-linear-to-b from-[#eee] to-[#c8c8c8] pr-11">
                <span className="flex h-[7px] w-[7px] justify-between"><i className="w-px bg-[#555]" /><i className="w-px bg-[#555]" /><i className="w-px bg-[#555]" /></span>
              </div>
              <span className="flex flex-1 justify-end pr-1.5"><svg viewBox="0 0 4 7" className="h-[7px] w-1"><path d="M0 0v7l4-3.500z" fill="#222" /></svg></span>
            </div>
          </div>
          <div className="mb-4 flex w-4 shrink-0 flex-col items-center bg-[#f0f0f0]">
            <span className="flex h-[17px] items-center"><svg viewBox="0 0 7 4" className="h-1 w-[7px]"><path d="M0 4h7L3.500 0z" fill="#444" /></svg></span>
            <span className="flex-1" />
            <div className="flex h-[113px] w-[15px] items-center justify-center rounded-xs border border-[#8c8c8c] bg-linear-to-r from-[#f4f4f4] to-[#c8c8c8]"><VThumbLines /></div>
            <span className="flex h-[18px] items-center"><svg viewBox="0 0 7 4" className="h-1 w-[7px]"><path d="M0 0h7L3.500 4z" fill="#444" /></svg></span>
          </div>
        </div>
      </div>
    </aside>
  );
}

/* ---------- module area ---------- */

function ContextBar() {
  const items = [["模块:", "部件"], ["模型:", "ec24dfd6"], ["部件:", "PART-1"]];
  return (
    <div className="flex h-8 shrink-0 items-center gap-[13px] bg-linear-to-b from-[#fafafa] to-[#ededed] pl-[7px] text-xs text-black">
      {items.map(([label, value]) => (
        <label key={label} className="flex shrink-0 items-center">
          <span className="w-[33px] whitespace-nowrap">{label}</span>
          <Combo label={label} value={value} spin className="w-[97px]" />
        </label>
      ))}
    </div>
  );
}

const TOOLBOX: [string, ReactNode][][] = [
  [["创建部件", <PartIcon />], ["部件管理器", <ManagerIcon />], ["拉伸实体", <ExtrudeIcon />], ["拉伸壳", <ShellIcon />], ["创建线", <WireIcon />], ["拉伸切削", <CutIcon />], ["倒圆角", <RoundIcon />], ["镜像", <MirrorIcon />]],
  [["编辑特征", <EditFeature />], ["重新生成", <MoveFeature />], ["删除特征", <DeleteFeature />]],
  [["分割边", <DatumCursor />], ["分割面", <LPoint />], ["分割几何体", <RegionIcon />], ["裁剪", <ScissorIcon />]],
  [["基准点", <XyzIcon />], ["基准轴", <TriAxis />], ["基准面", <PlaneIcon />], ["基准坐标系", <DatumPoints />]],
  [["移动面", <PlaneMove />], ["修复边", <WaveIcon />], ["删除面", <ErasePage />], ["几何编辑", <ToolsIcon />]],
  [["创建中面", <CombineIcon />], ["指派中面", <RepairIcon />]],
];

function Toolbox() {
  return (
    <div className="flex w-[62px] shrink-0 flex-col bg-[#f6f6f6] pt-1 pr-0.5 pl-[3px]">
      {TOOLBOX.map((group, i) => (
        <div key={i} className={cx("grid grid-cols-[28px_28px]", i > 0 && "mt-px border-t border-[#a0a0a0] pt-[5px]")}>
          {group.map(([label, icon]) => (
            <button key={label} type="button" aria-label={label} className="flex size-7 items-center justify-center">{icon}</button>
          ))}
        </div>
      ))}
    </div>
  );
}

function Viewport() {
  return (
    <div className="relative min-w-0 flex-1 overflow-hidden bg-linear-to-b from-[#1a2c45] from-0% via-[#30405b] via-60% to-[#a1b0c6] to-100%">
      {/* ten stacked cells, the first one highlighted */}
      <svg viewBox="0 0 37 348" className="absolute top-[51px] left-[386px] h-[348px] w-[37px]">
        <path d="M1.500 2h34v345h-34z" fill="#40923f" stroke="#0a1f0c" />
        {[2, 3, 4, 5, 6, 7, 8, 9].map((n) => (
          <path key={n} d={`M1 ${Math.round(n * 34.5) + 1.5}h35`} stroke="#0c2a0e" strokeWidth="1.200" />
        ))}
        <path d="M2 2h34v34H2z" stroke="#d08a20" strokeWidth="2" fill="none" />
      </svg>
      <svg viewBox="0 0 13 20" className="absolute top-[355px] left-[389px] h-5 w-[13px]">
        <path d="M1 1v15l3.500-3 3 6 2.500-1-3-6h5z" fill="#fff" stroke="#222" strokeWidth=".8" />
      </svg>
      {/* coordinate triad */}
      <svg viewBox="0 0 60 60" className="absolute top-[433px] left-[71px] size-[60px]" fontFamily="DejaVu Sans, sans-serif" fontWeight="bold" fontSize="9">
        <path d="M6.500 31h3v18h-3z" fill="#12b812" /><path d="M8 19l5 12H3z" fill="#12c412" />
        <path d="M10 48.500h20v3H10z" fill="#b01010" /><path d="M39 50l-10-4v8z" fill="#a00c0c" />
        <circle cx="8" cy="50" r="5" fill="#0a0a90" />
        <text x="5" y="53" fill="#fff">Z</text>
        <text x="4" y="11" fill="#fff">Y</text>
        <text x="45" y="53" fill="#fff">X</text>
      </svg>
      {/* view compass */}
      <svg viewBox="0 0 60 80" className="absolute top-1 right-6 h-20 w-[60px]" fontFamily="DejaVu Sans, sans-serif" fontSize="7">
        <path d="M16 22a27 27 0 0 1 27 27H16z" fill="#145c6c" stroke="#d6d4fa" strokeWidth="1.800" />
        <path d="M16 14v57M1 71.500h36" stroke="#d6d4fa" strokeWidth="2" />
        <circle cx="16" cy="15" r="2.500" fill="#d6d4fa" /><circle cx="16" cy="71.500" r="3.500" fill="#e00808" />
        <text x="13.500" y="8" fill="#e8e440">Y</text><text x="48" y="51" fill="#e8e440">X</text><text x="12" y="52" fill="#e8e440">Z</text>
      </svg>
    </div>
  );
}

function BrandBar() {
  return (
    <div className="flex h-[34px] shrink-0 items-center justify-end gap-1 bg-linear-to-b from-[#fafafa] to-[#ececec] text-[#2a9a8c]">
      <svg viewBox="0 0 22 24" className="h-6 w-[22px]" fill="none" stroke="currentColor" strokeWidth="1.500">
        <path d="M9 2c5-1 7 1 3 4-2 1.500-3 2-5 3 5-1 8 1 5 6-2 4-6 6-10 7 2-4 4-7 7-11" />
        <path d="M21 9c-4-1-7 1-5 4 3 3 1 6-5 5" />
      </svg>
      <span className="-mr-0.5 font-['DejaVu_Sans',sans-serif] text-[15px] font-bold italic">SIMULIA</span>
    </div>
  );
}

function Console() {
  return (
    <footer className="flex h-[62px] shrink-0 bg-[#f0f0f0] pb-[3px]">
      <div className="flex min-w-0 flex-1 border-t-2 border-r border-b border-[#8c8c8c] bg-white">
        <div className="min-w-0 flex-1 overflow-hidden pt-[3px] font-['Liberation_Mono','Noto_Sans_CJK_SC',monospace] text-[13px] leading-[13px] whitespace-pre text-black">
          <p className="-ml-1.5">ODEFILE</p>
          <p className="-ml-1.5">ODEPRINT</p>
          <p className="-ml-1"><span className="text-sm leading-[13px]">型</span> "ec24dfd6" <span className="text-sm leading-[13px]">已从输入文件导入</span>.</p>
          <p className="-ml-1"><span className="text-sm leading-[13px]">向上拖动滚动条以查看错误或警告信息</span>.</p>
        </div>
        <div className="flex w-4 shrink-0 flex-col items-center bg-[#f0f0f0] py-[7px]">
          <svg viewBox="0 0 7 4" className="h-1 w-[7px]"><path d="M0 4h7L3.500 0z" fill="#333" /></svg>
          <span className="flex-1" />
          <span className="mb-2 flex h-2.5 w-[15px] items-center justify-center rounded-xs border border-[#999] bg-[#e4e4e4]"><VThumbLines /></span>
          <svg viewBox="0 0 7 4" className="h-1 w-[7px]"><path d="M0 0h7L3.500 4z" fill="#333" /></svg>
        </div>
      </div>
      <div className="flex w-[11px] shrink-0 items-end justify-end">
        <svg viewBox="0 0 8 8" className="size-2"><path d="M1 6h2v2H1zM6 6h2v2H6zM6 1h2v2H6z" fill="#a0a0a0" /></svg>
      </div>
    </footer>
  );
}

export default function App() {
  return (
    <div className="flex h-screen flex-col overflow-hidden bg-[#fafafa] font-['Noto_Sans','Noto_Sans_CJK_SC',sans-serif]">
      <TitleBar />
      <MenuBar />
      <Toolbars />
      <main className="flex min-h-0 flex-1">
        <div className="flex pb-1.5"><ModelTree /></div>
        <section className="ml-[5px] flex min-w-0 flex-1 flex-col overflow-hidden pb-1">
          <ContextBar />
          <div className="flex min-h-0 flex-1">
            <Toolbox />
            <Viewport />
          </div>
          <BrandBar />
        </section>
      </main>
      <Console />
    </div>
  );
}
